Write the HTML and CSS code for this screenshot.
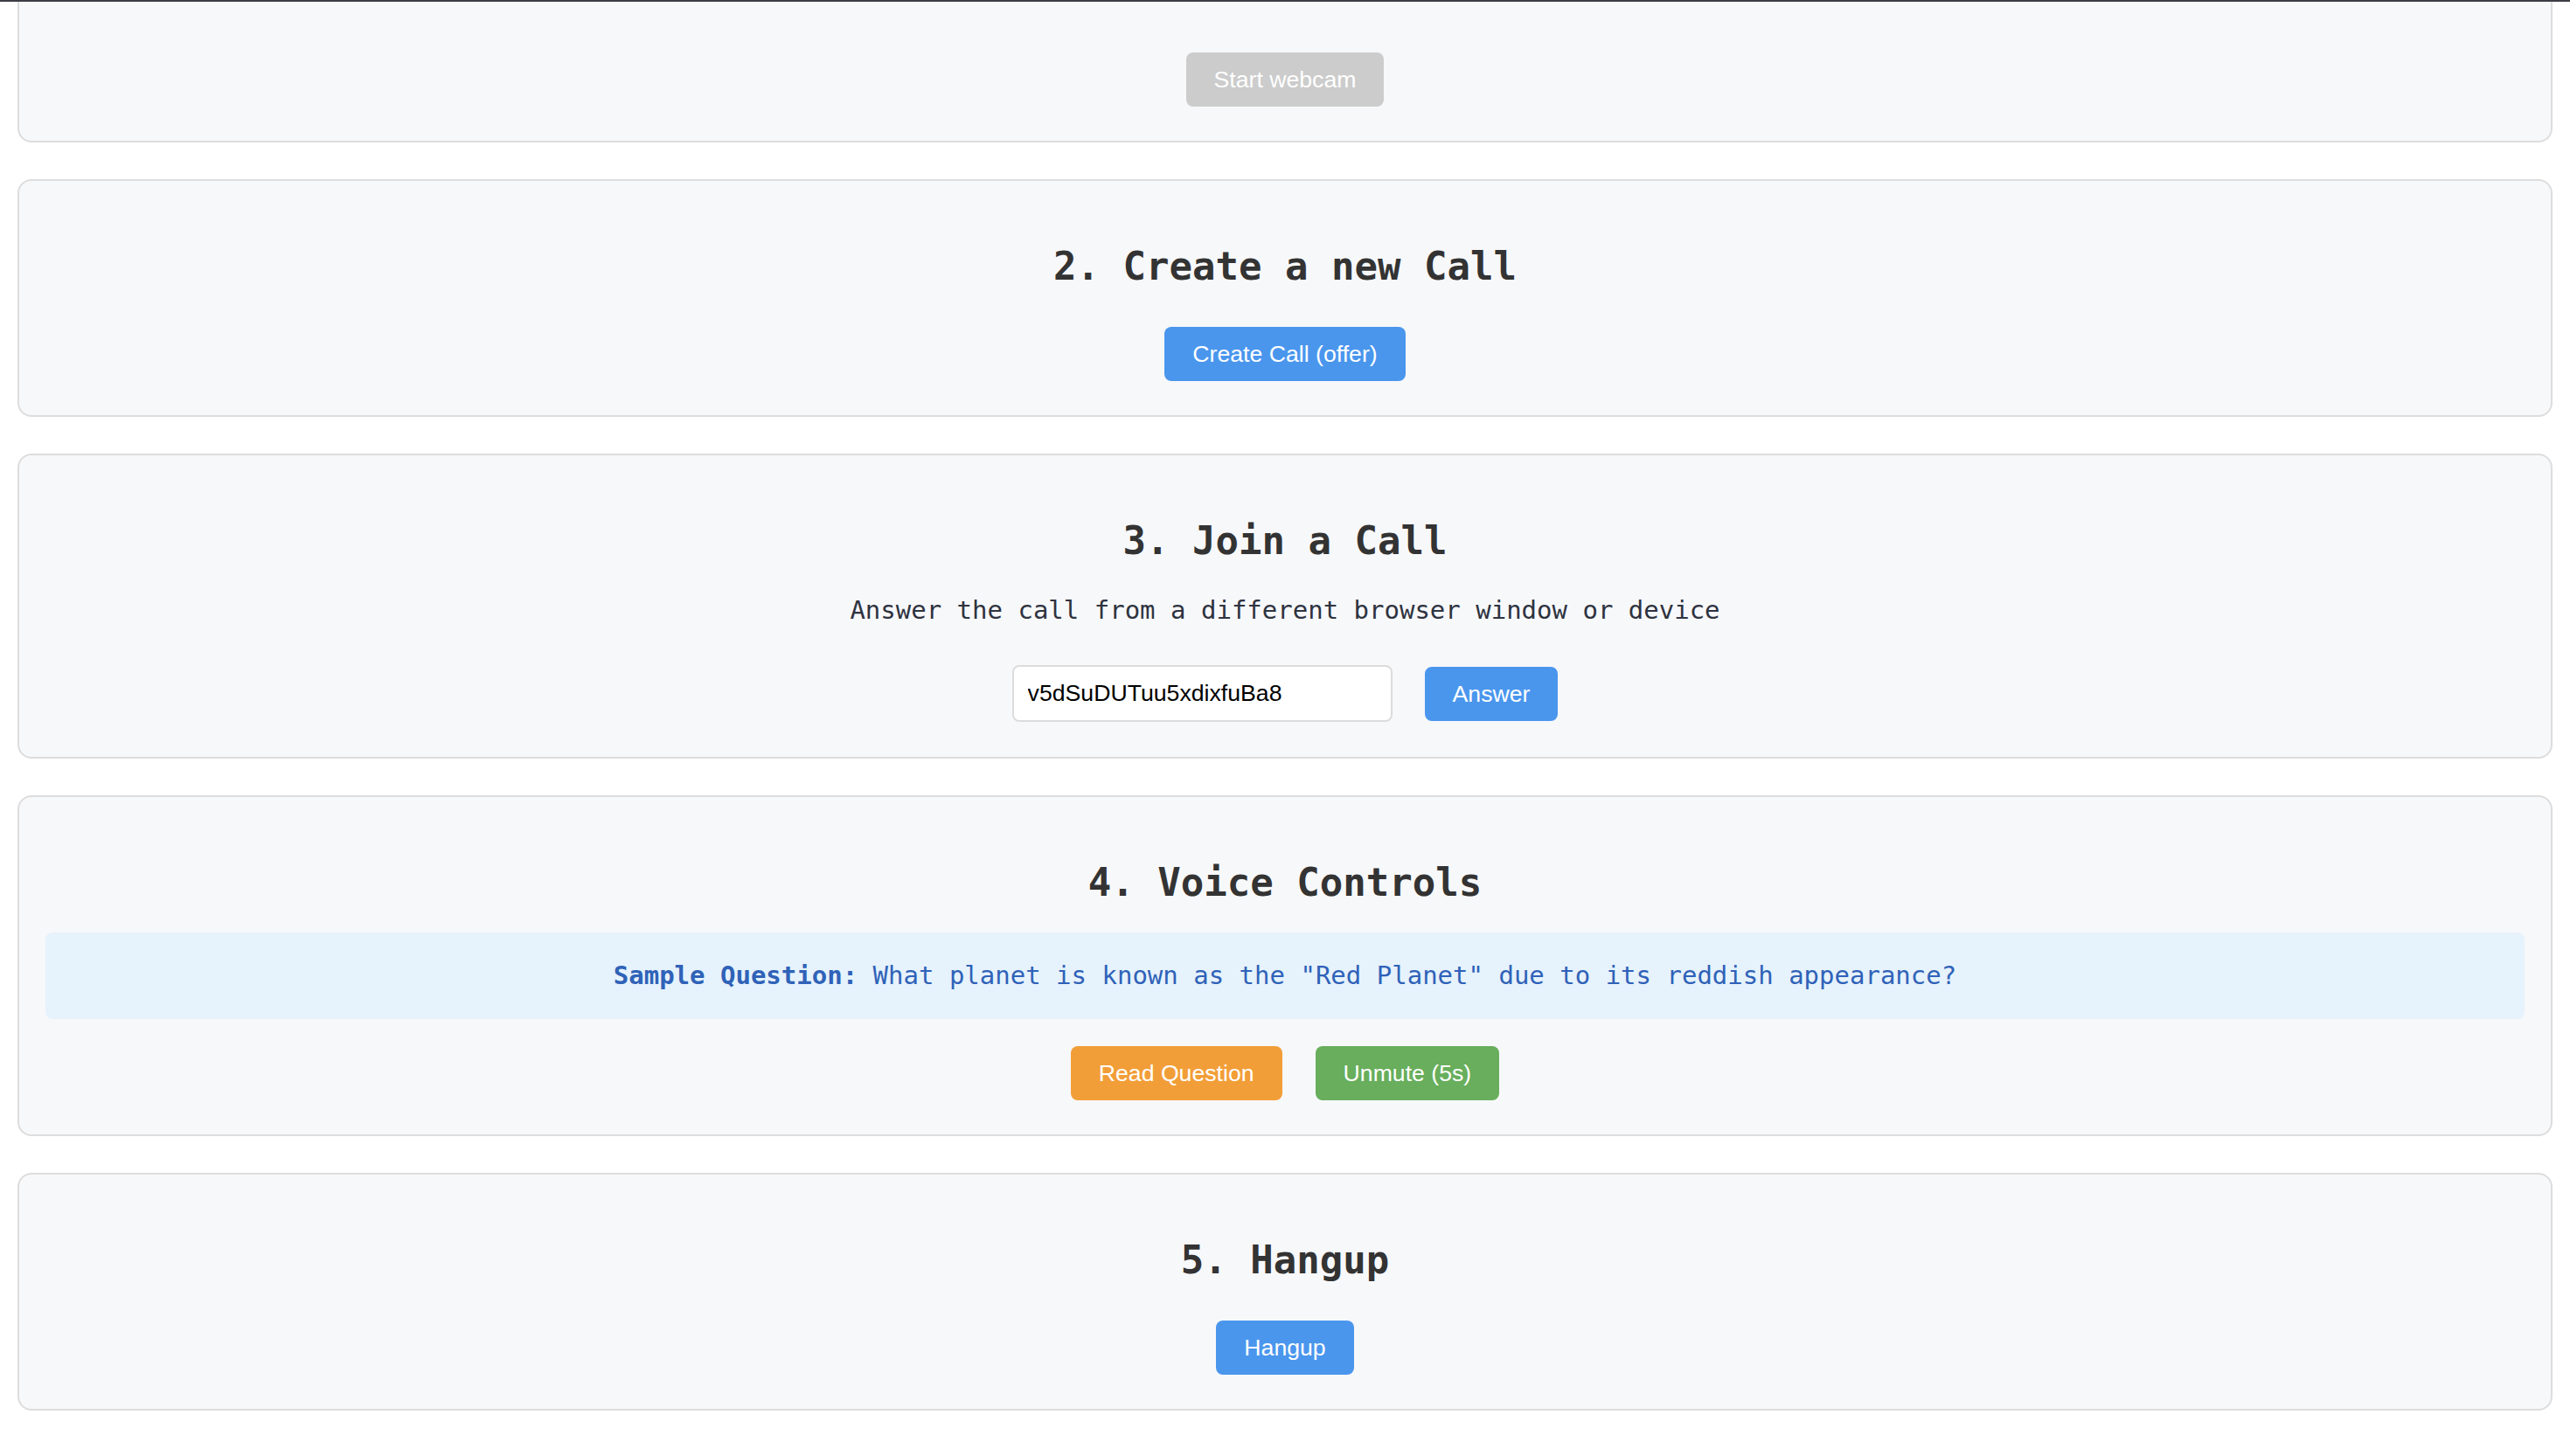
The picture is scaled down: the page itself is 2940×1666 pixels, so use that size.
FILE: index.html
```html
<!DOCTYPE html>
<html lang="en">
<head>
<meta charset="utf-8">
<title>WebRTC Voice Call</title>
<link rel="stylesheet" href="styles.css">
</head>
<body>
<div class="topbar"></div>
<main class="page">
  <section class="card card-cut">
    <div class="actions">
      <button class="btn btn-disabled" disabled>Start webcam</button>
    </div>
  </section>

  <section class="card">
    <h2 class="title">2. Create a new Call</h2>
    <div class="actions">
      <button class="btn btn-blue">Create Call (offer)</button>
    </div>
  </section>

  <section class="card">
    <h2 class="title">3. Join a Call</h2>
    <p class="note">Answer the call from a different browser window or device</p>
    <div class="actions actions-join">
      <input class="call-input" type="text" value="v5dSuDUTuu5xdixfuBa8">
      <button class="btn btn-blue">Answer</button>
    </div>
  </section>

  <section class="card">
    <h2 class="title">4. Voice Controls</h2>
    <div class="sample"><strong>Sample Question:</strong> What planet is known as the "Red Planet" due to its reddish appearance?</div>
    <div class="actions">
      <button class="btn btn-orange">Read Question</button>
      <button class="btn btn-green">Unmute (5s)</button>
    </div>
  </section>

  <section class="card">
    <h2 class="title">5. Hangup</h2>
    <div class="actions">
      <button class="btn btn-blue">Hangup</button>
    </div>
  </section>
</main>
</body>
</html>
```

FILE: styles.css
```css
* {
  box-sizing: border-box;
}

html, body {
  margin: 0;
  padding: 0;
  background: #ffffff;
}

body {
  font-family: "DejaVu Sans Mono", "Liberation Mono", monospace;
  color: #333333;
}

.topbar {
  height: 2px;
  background: #3d3d45;
}

.page {
  display: flex;
  flex-direction: column;
  gap: 42px;
  padding: 0 20px;
}

.card {
  background: #f7f8fa;
  border: 2px solid #dddddd;
  border-radius: 16px;
  padding: 72px 30px 39px;
  text-align: center;
}

.card-cut {
  border-top: none;
  border-top-left-radius: 0;
  border-top-right-radius: 0;
  padding-top: 58px;
}

.title {
  margin: 0 0 43px;
  font-size: 44px;
  line-height: 52px;
  font-weight: bold;
  color: #333333;
}

.note {
  margin: -8px 0 45px;
  font-size: 29px;
  line-height: 36px;
  color: #2e3340;
}

.actions {
  display: flex;
  justify-content: center;
  align-items: center;
  gap: 38px;
}

.actions-join {
  gap: 37px;
  margin-bottom: 1px;
}

.btn {
  font-family: "Liberation Sans", Arial, sans-serif;
  font-size: 26.67px;
  line-height: 30px;
  color: #ffffff;
  border: none;
  border-radius: 8px;
  padding: 16px 32px;
  height: 62px;
  cursor: pointer;
}

.btn-disabled {
  background: #cccccc;
  cursor: default;
}

.btn-blue {
  background: #4a96ed;
}

.btn-orange {
  background: #f29e38;
}

.btn-green {
  background: #68ae5c;
}

.call-input {
  width: 435px;
  height: 65px;
  padding: 0 16px;
  font-family: "Liberation Sans", Arial, sans-serif;
  font-size: 26.67px;
  color: #000000;
  background: #ffffff;
  border: 2px solid #dcdcdc;
  border-radius: 8px;
}

.sample {
  margin: -12px 0 31px;
  background: #e6f2fc;
  border-radius: 8px;
  height: 99px;
  line-height: 99px;
  font-size: 29px;
  color: #2f62b8;
  text-align: center;
  white-space: nowrap;
}

.sample strong {
  font-weight: bold;
}
```
